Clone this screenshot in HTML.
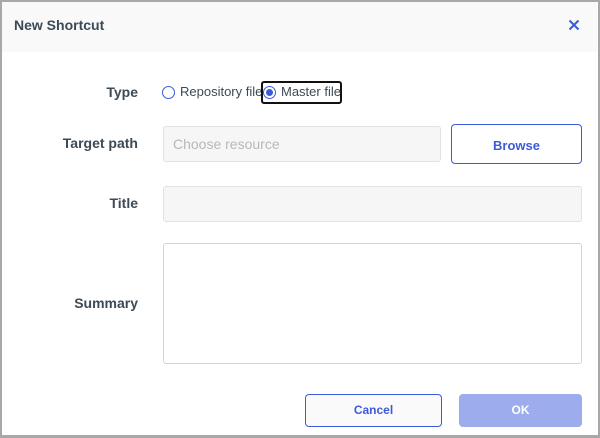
<html><head><style>
body{margin:0;width:600px;height:437px;overflow:hidden;font-family:"Liberation Sans",sans-serif;background:#fff}
.frame{position:absolute;left:0;top:0;width:596px;height:433px;border:2px solid #a8a8a8;border-right-width:3px;border-bottom-width:3px;}
.hdr{position:absolute;left:2px;top:2px;width:595px;height:50px;background:#f9f9f9}
.t{position:absolute;left:12px;top:15px;font-size:14px;font-weight:bold;color:#3c4a55}
.x{position:absolute;left:566px;top:17px}
.lbl{position:absolute;right:462px;font-size:14px;font-weight:bold;color:#3c4a55}
.box{position:absolute;background:#f6f6f6;border:1px solid #e2e2e2;border-radius:3px;box-sizing:border-box}
.btn{position:absolute;box-sizing:border-box;border-radius:4px;font-size:12px;font-weight:bold;text-align:center}
.rad{position:absolute;width:13px;height:13px;border:1.5px solid #3b5bdb;border-radius:50%;box-sizing:border-box}
</style></head><body>
<div class="frame"></div>
<div class="hdr"><div class="t">New Shortcut</div>
<svg class="x" width="12" height="12" viewBox="0 0 12 12"><path d="M1.5 1.5L10.5 10.5M10.5 1.5L1.5 10.5" stroke="#3b5bdb" stroke-width="2"/></svg></div>
<div class="lbl" style="top:84px">Type</div>
<div class="rad" style="left:162px;top:86px"></div>
<div style="position:absolute;left:180px;top:84px;font-size:13px;color:#3c4a55">Repository file</div>
<div style="position:absolute;left:261px;top:81px;width:81px;height:23px;border:2px solid #111;border-radius:3px;box-sizing:border-box"></div>
<div class="rad" style="left:263px;top:86px"><div style="position:absolute;left:1.5px;top:1.5px;width:7px;height:7px;border-radius:50%;background:#3b5bdb"></div></div>
<div style="position:absolute;left:281px;top:84px;font-size:13px;color:#3c4a55">Master file</div>
<div class="lbl" style="top:135px">Target path</div>
<div class="box" style="left:163px;top:126px;width:278px;height:36px"><span style="position:absolute;left:9px;top:9px;font-size:14px;color:#b8b8b8">Choose resource</span></div>
<div class="btn" style="left:451px;top:124px;width:131px;height:40px;border:1px solid #3b5bdb;color:#3b5bdb;line-height:42px;font-size:13px">Browse</div>
<div class="lbl" style="top:195px">Title</div>
<div class="box" style="left:163px;top:186px;width:419px;height:36px"></div>
<div class="lbl" style="top:295px">Summary</div>
<div class="box" style="left:163px;top:243px;width:419px;height:121px;background:#fff;border-color:#d4d4d4"></div>
<div class="btn" style="left:305px;top:394px;width:137px;height:33px;border:1px solid #3b5bdb;color:#3b5bdb;background:#fafafa;line-height:31px">Cancel</div>
<div class="btn" style="left:459px;top:394px;width:123px;height:33px;background:#9dacec;color:#fff;line-height:33px">OK</div>
</body></html>
